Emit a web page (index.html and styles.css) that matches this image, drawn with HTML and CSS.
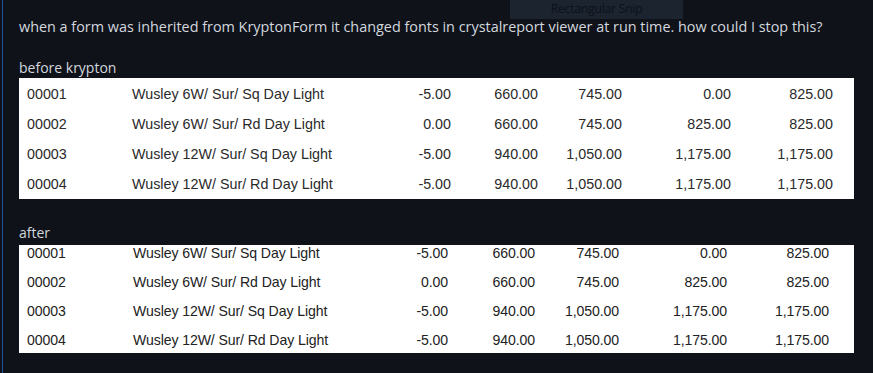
FILE: index.html
```html
<!DOCTYPE html>
<html>
<head>
<meta charset="utf-8">
<link rel="stylesheet" href="styles.css">
</head>
<body>
<div class="frame">
  <p class="question">when a form was inherited from KryptonForm it changed fonts in crystalreport viewer at run time. how could I stop this?</p>
  <div class="label">before krypton</div>
  <div class="report before">
    <div class="row"><span>00001</span><span>Wusley 6W/ Sur/ Sq Day Light</span><span class="n">-5.00</span><span class="n">660.00</span><span class="n">745.00</span><span class="n">0.00</span><span class="n">825.00</span></div>
    <div class="row"><span>00002</span><span>Wusley 6W/ Sur/ Rd Day Light</span><span class="n">0.00</span><span class="n">660.00</span><span class="n">745.00</span><span class="n">825.00</span><span class="n">825.00</span></div>
    <div class="row"><span>00003</span><span>Wusley 12W/ Sur/ Sq Day Light</span><span class="n">-5.00</span><span class="n">940.00</span><span class="n">1,050.00</span><span class="n">1,175.00</span><span class="n">1,175.00</span></div>
    <div class="row"><span>00004</span><span>Wusley 12W/ Sur/ Rd Day Light</span><span class="n">-5.00</span><span class="n">940.00</span><span class="n">1,050.00</span><span class="n">1,175.00</span><span class="n">1,175.00</span></div>
  </div>
  <div class="label after-label">after</div>
  <div class="report after">
    <div class="rows">
      <div class="row"><span>00001</span><span>Wusley 6W/ Sur/ Sq Day Light</span><span class="n">-5.00</span><span class="n">660.00</span><span class="n">745.00</span><span class="n">0.00</span><span class="n">825.00</span></div>
      <div class="row"><span>00002</span><span>Wusley 6W/ Sur/ Rd Day Light</span><span class="n">0.00</span><span class="n">660.00</span><span class="n">745.00</span><span class="n">825.00</span><span class="n">825.00</span></div>
      <div class="row"><span>00003</span><span>Wusley 12W/ Sur/ Sq Day Light</span><span class="n">-5.00</span><span class="n">940.00</span><span class="n">1,050.00</span><span class="n">1,175.00</span><span class="n">1,175.00</span></div>
      <div class="row"><span>00004</span><span>Wusley 12W/ Sur/ Rd Day Light</span><span class="n">-5.00</span><span class="n">940.00</span><span class="n">1,050.00</span><span class="n">1,175.00</span><span class="n">1,175.00</span></div>
    </div>
  </div>
</div>
<div class="snip">Rectangular Snip</div>
</body>
</html>
```

FILE: styles.css
```css
html, body {
  margin: 0;
  padding: 0;
  background: #0f1219;
  height: 100%;
}
body {
  position: relative;
  overflow: hidden;
}
.frame {
  margin-left: 2px;
  width: 867px;
  height: 373px;
  border-left: 1px solid #1f4f96;
  border-right: 1px solid #2a5cab;
  padding-left: 16px;
  box-sizing: content-box;
}
.question {
  margin: 0;
  padding-top: 17px;
  font-family: "Open Sans", sans-serif;
  font-size: 14.4px;
  line-height: 20px;
  color: #d3d7df;
  white-space: nowrap;
}
.label {
  margin-top: 21px;
  font-family: "Open Sans", sans-serif;
  font-size: 14px;
  line-height: 20px;
  color: #d3d7df;
}
.after-label {
  margin-top: 24px;
}
.report {
  width: 835px;
  background: #ffffff;
  color: #2a2a2a;
  font-family: "Liberation Sans", Arial, sans-serif;
  font-size: 14.3px;
  overflow: hidden;
}
.before {
  height: 121px;
  padding-top: 1px;
  box-sizing: border-box;
}
.before .row {
  display: grid;
  grid-template-columns: 105px 268px 51px 87px 84px 109px 102px;
  padding-left: 8px;
  height: 30px;
  align-items: center;
}
.after {
  margin-top: 2px;
  height: 108px;
  color: #222222;
}
.after .rows {
  margin-top: -7px;
}
.after .row {
  display: grid;
  grid-template-columns: 106px 267px 48px 87px 84px 108px 102px;
  padding-left: 8px;
  height: 29px;
  align-items: center;
  font-size: 14.1px;
  letter-spacing: -0.1px;
}
.n {
  text-align: right;
}
.snip {
  position: absolute;
  left: 510px;
  top: 0;
  width: 173px;
  height: 19px;
  background: #1c2430;
  color: #0d121a;
  font-family: "Open Sans", sans-serif;
  font-size: 12.5px;
  line-height: 18px;
  text-align: center;
  letter-spacing: -0.4px;
}
```
